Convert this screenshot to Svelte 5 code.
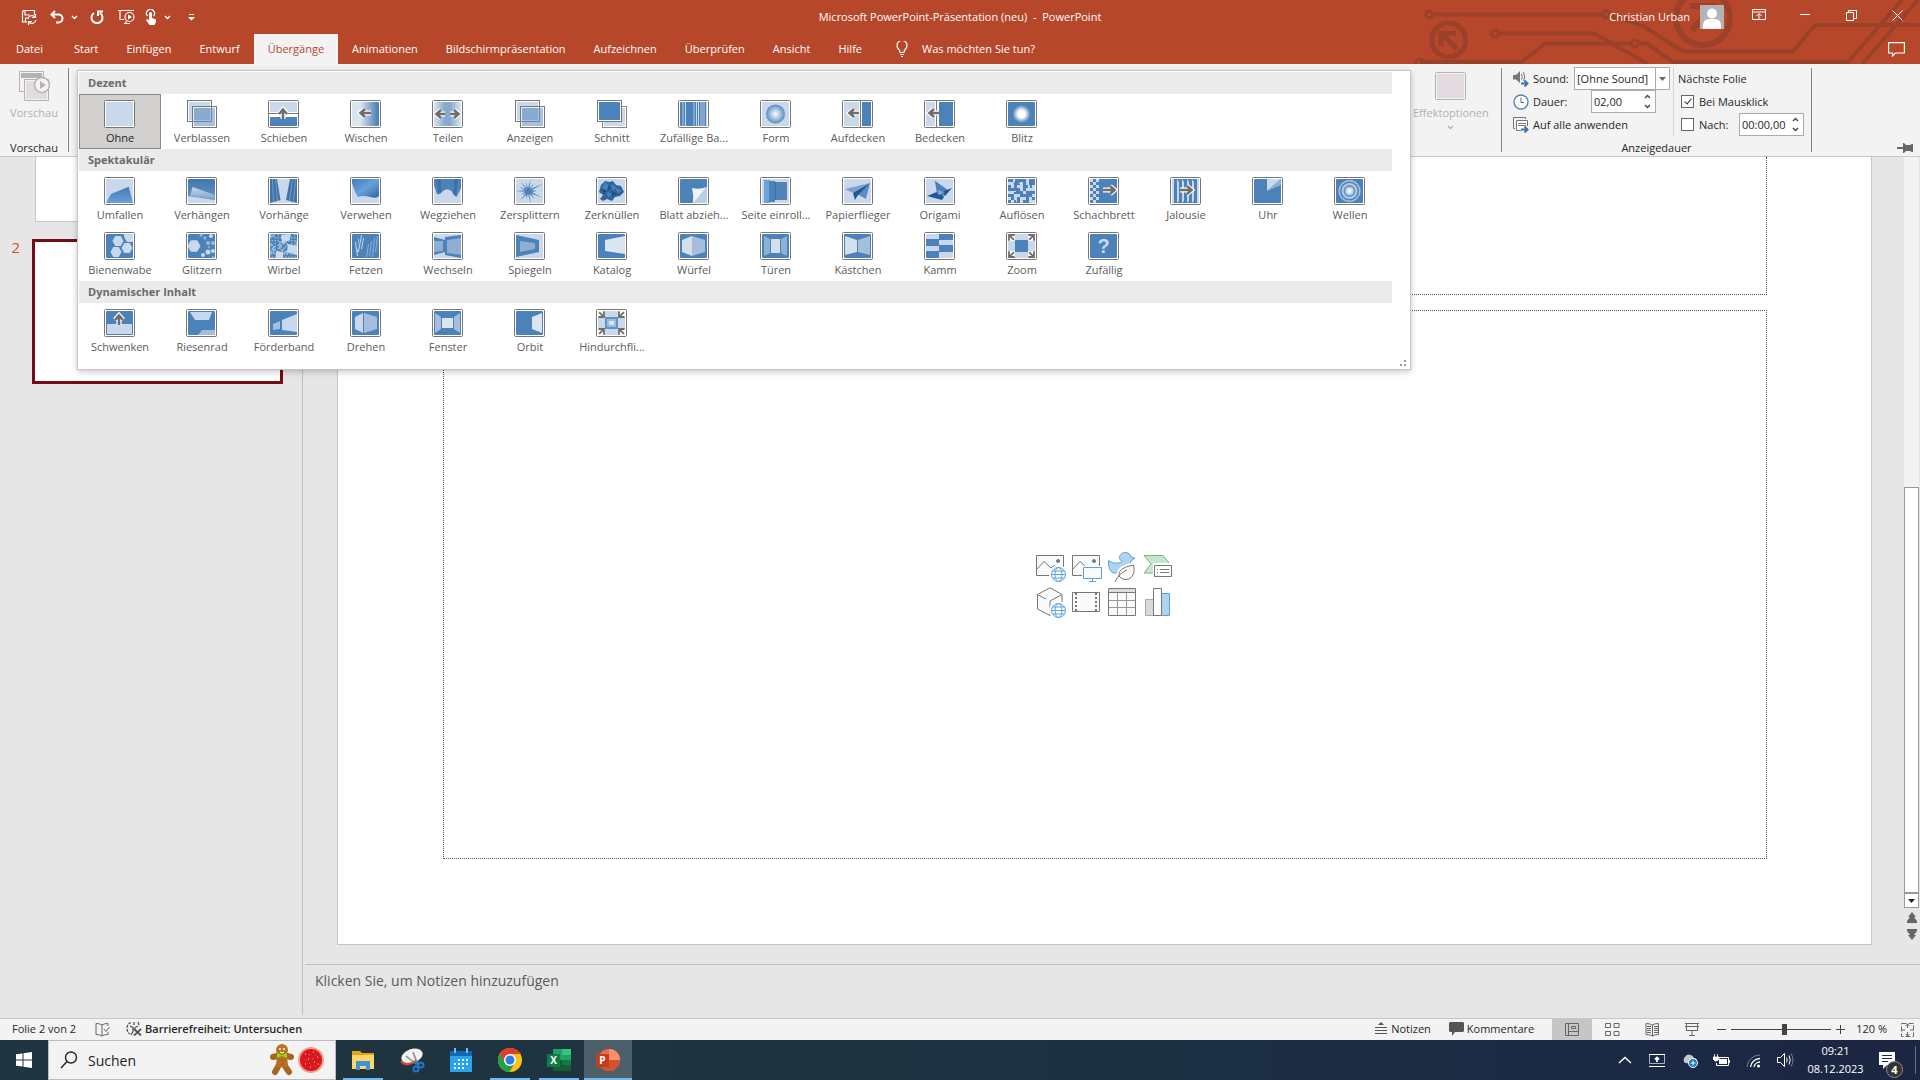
<script>
  const DARK = "#4b82b9";
  const MID = "#87aad0";
  const LIGHT = "#c9d8ea";
  const PALE = "#dbe5f0";

  const box = (x, y, w, h) => `M${x} ${y}h${w}v${h}h${-w}z`;
  const hex = (x, y, r) =>
    `M${x - r} ${y}L${x - r / 2} ${y - r * 0.9}H${x + r / 2}L${x + r} ${y}L${x + r / 2} ${y + r * 0.9}H${x - r / 2}z`;
  const disc = (x, y, r) => `M${x - r} ${y}a${r} ${r} 0 1 0 ${2 * r} 0a${r} ${r} 0 1 0 ${-2 * r} 0z`;
  const pixels = (rows, size, x0 = 2, y0 = 2) =>
    rows
      .flatMap((row, y) => [...row].map((c, x) => (c === "#" ? box(x0 + x * size, y0 + y * size, size, size) : "")))
      .join("");
  const noise = Array.from({ length: 16 }, (_, y) =>
    Array.from({ length: 18 }, (_, x) => ((x * 7 + y * 13 + x * y * 5) % 11 < 5 ? "#" : ".")).join(""),
  );
  const burst = (x, y, radii) =>
    "M" +
    radii
      .map((r, i) => {
        const a = (i / radii.length) * Math.PI * 2;
        return `${(x + Math.cos(a) * r).toFixed(1)} ${(y + Math.sin(a) * r).toFixed(1)}`;
      })
      .join("L") +
    "z";

  // shapes are [fill, path]; arrows are [tipX, tipY, angle, length], angle 0 points left
  const sections = [
    {
      title: "Dezent",
      items: [
        { label: "Ohne", bg: LIGHT },
        { label: "Verblassen", stack: [LIGHT, MID] },
        {
          label: "Schieben",
          bg: "#fff",
          shapes: [[LIGHT, box(2, 2, 27, 10)], ["#777", box(0, 13, 31, 1)], [DARK, box(2, 17, 27, 9)]],
          arrows: [[15, 8, 90, 11]],
        },
        { label: "Wischen", bg: "url(#wipe)", arrows: [[9, 13, 0, 12]] },
        { label: "Teilen", bg: "url(#split)", arrows: [[3, 14, 0, 10], [28, 14, 180, 10]] },
        { label: "Anzeigen", stack: [LIGHT, MID] },
        { label: "Schnitt", cut: true },
        {
          label: "Zufällige Ba...",
          bg: DARK,
          shapes: [
            ["#7fa6d0", box(4, 2, 2, 24) + box(15, 2, 2, 24) + box(22, 2, 5, 24)],
            [LIGHT, box(7, 2, 1, 24) + box(18, 2, 1, 24) + box(20, 2, 1, 24) + box(28, 2, 1, 24)],
          ],
        },
        { label: "Form", bg: LIGHT, shapes: [["url(#ball)", disc(15.5, 14, 9.5)]] },
        {
          label: "Aufdecken",
          bg: "#fff",
          shapes: [[LIGHT, box(2, 2, 15, 24)], ["#777", box(18, 0, 1, 28)], [DARK, box(20, 2, 9, 24)]],
          arrows: [[6, 13, 0, 11]],
        },
        {
          label: "Bedecken",
          bg: "#fff",
          shapes: [[LIGHT, box(2, 2, 9, 24)], ["#777", box(12, 0, 1, 28)], [DARK, box(15, 2, 14, 24)]],
          arrows: [[4, 13, 0, 11]],
        },
        { label: "Blitz", bg: DARK, shapes: [["url(#flash)", disc(15.5, 14, 9)]] },
      ],
    },
    {
      title: "Spektakulär",
      items: [
        { label: "Umfallen", bg: LIGHT, shapes: [["url(#fall)", "M24.700 9.700L7 17L2 26H29z"]] },
        {
          label: "Verhängen",
          bg: "url(#drape)",
          shapes: [[LIGHT, "M2 19L29 23V26H2z"], ["url(#fold)", "M6.500 10L29 18V22L4 19z"]],
        },
        {
          label: "Vorhänge",
          bg: LIGHT,
          shapes: [
            ["#3f73a9", "M2 2H9L12.500 23L2 26zM22 2H29V26L18 23z"],
            ["#6f9dcb", "M4 2H5L6 25H5zM7 2H8L10 24H9zM24 2H25L22 24H21zM27 2H28L26 25H25z"],
          ],
        },
        { label: "Verwehen", bg: LIGHT, shapes: [["url(#blow)", "M2 2H29V19Q27 22 20 20Q13 18 8 20Q5 16 2 6z"]] },
        {
          label: "Wegziehen",
          bg: LIGHT,
          shapes: [
            [DARK, "M2 2H29V11L24.500 20Q21 18 19.500 14Q14 10 10 15Q8 18 5 17Q3 12 2 8z"],
            ["#3c70a6", "M5 2H9V15L6 16zM22 2H26L24 19L22 17z"],
          ],
        },
        {
          label: "Zersplittern",
          bg: LIGHT,
          shapes: [
            [DARK, burst(14, 14, [9, 4, 15, 4, 11, 3, 13, 3, 8, 4, 12, 3, 8, 3, 13, 3, 10, 3, 12, 3, 9, 3, 13, 3, 10, 3, 17, 4])],
          ],
        },
        {
          label: "Zerknüllen",
          bg: LIGHT,
          shapes: [
            ["#2f659c", "M5 8L9 4L13 5L17 4L20 8L25 9L28 15L24 19L19 20L16 24L11 22L7 24L4 22L7 18L3 15z"],
            [DARK, "M9 5L13 9L10 13L6 11zM15 7L20 10L17 14zM20 11L26 14L21 16zM11 15L16 17L12 21z"],
            ["#1e4f86", "M6 12L11 14L8 17zM16 14L22 17L16 19zM12 8L15 12L12 13z"],
          ],
        },
        {
          label: "Blatt abzieh...",
          bg: DARK,
          shapes: [["#b9cfe6", "M29 10V26H14z"], ["#eef3f9", "M14 11Q21 13 29 10L15 26Q16 18 14 11z"]],
        },
        {
          label: "Seite einroll...",
          bg: LIGHT,
          shapes: [["#6ea2d8", box(4, 3, 6, 23)], [DARK, box(9, 4, 6, 21)], ["#3a6ea5", box(15, 5, 1, 18)], ["#5384b6", box(16, 5, 11, 18)]],
        },
        {
          label: "Papierflieger",
          bg: LIGHT,
          shapes: [["#7ba2cd", "M28 6L3 12L11 16z"], ["#5c8dc0", "M28 6L15 17L24 22z"], ["#21568e", "M28 6L11 16L13 23L16 18z"]],
        },
        {
          label: "Origami",
          bg: LIGHT,
          shapes: [["#1f5a96", "M11 4L20 11L15 14zM3 19L15 14L20 20L18 23z"], [DARK, "M11 4L13 17L21 19L24 13z"], ["#21568e", "M20 14L28 11L21 19z"], ["#8eb0d4", "M14 13L19 15L15 18z"]],
        },
        {
          label: "Auflösen",
          bg: LIGHT,
          shapes: [
            [DARK, pixels([
              "######.##",
              "..##.#.##",
              "#.#..###.",
              "####.#...",
              "..###.###",
              "##..####.",
              ".#.#..#.#",
              "#.##.##..",
            ], 3)],
            [LIGHT, box(7, 2, 2, 3) + box(13, 6, 4, 1) + box(22, 8, 2, 4) + box(10, 20, 1, 5) + box(5, 14, 5, 1)],
          ],
        },
        {
          label: "Schachbrett",
          bg: DARK,
          shapes: [[LIGHT, pixels(["#.#", ".#.", "#.#", ".#.", "#.#", ".#.", "#.#", ".#."], 3)]],
          arrows: [[28, 13, 180, 13]],
        },
        {
          label: "Jalousie",
          bg: DARK,
          shapes: [[LIGHT, "M2 2H4V26H2zM7 2L9 5V24L7 26zM12 2L14 5V24L12 26zM17 2L19 5V24L17 26zM22 2L24 5V24L22 26zM27 2H29V26H27z"]],
          arrows: [[23, 13, 180, 13]],
        },
        { label: "Uhr", bg: DARK, shapes: [[LIGHT, "M15 14V2H29z"], ["#8eb0d4", "M15 14L29 2V8z"]] },
        {
          label: "Wellen",
          bg: DARK,
          shapes: [["#a5bfdd", disc(15.5, 14, 11)], [DARK, disc(15.5, 14, 9.5)], ["#b4cae3", disc(15.5, 14, 8)], ["#6b97c6", disc(15.5, 14, 6)], ["#c9d8ea", disc(15.5, 14, 4)], ["#fff", disc(15.5, 14, 2)]],
        },
        { label: "Bienenwabe", bg: DARK, shapes: [[LIGHT, hex(14, 9, 5.5) + hex(23, 16, 5.5) + hex(12, 20, 5.5) + "M20 2H29V10H23L20 5z"]] },
        {
          label: "Glitzern",
          bg: DARK,
          shapes: [
            [LIGHT, hex(8, 14, 6.5) + disc(25, 4, 2) + disc(22, 20, 2.5) + disc(27, 19, 2) + disc(17, 23, 2)],
            ["#9bbadb", disc(19, 6, 1.5) + disc(22, 11, 2) + disc(27, 11, 2) + disc(27, 25, 1) + disc(15, 3, 1.5) + disc(23, 15, 1)],
          ],
        },
        {
          label: "Wirbel",
          bg: DARK,
          shapes: [["#9bbadb", pixels(noise, 1.5)], [LIGHT, "M13 3L22 2V8L14 11zM20 12L29 14V23L19 20zM8 19L15 20V26H8z"]],
        },
        {
          label: "Fetzen",
          bg: DARK,
          shapes: [
            [LIGHT, "M5 10L6 10L8 24H7zM8 7L9 7L7 22H8zM11 3H12L9 20H8zM13 6H14L12 17H11z"],
            ["#8fb0d5", "M18 12H19L17 25H16zM21 9H22L20 24H19zM24 6H25L23 25H22zM27 4H28L26 20H25z"],
          ],
        },
        {
          label: "Wechseln",
          bg: LIGHT,
          shapes: [[DARK, "M2 5L13 8V5L29 3V26L13 23V20L2 23z"], ["#8eaed2", "M2 9H11V19L2 20zM15 8L29 6V23L15 21z"]],
        },
        {
          label: "Spiegeln",
          bg: LIGHT,
          shapes: [[DARK, "M2 3L25 8V20L2 25z"], ["#8eaed2", "M6 9L21 11V17L6 20z"]],
        },
        { label: "Katalog", bg: DARK, shapes: [[PALE, "M9 8L29 4V22L9 19z"]] },
        { label: "Würfel", bg: DARK, shapes: [["#d3e0ea", "M4 8L14 4V24L4 20z"], ["#a5bedb", "M14 4L27 8V20L14 24z"]] },
        {
          label: "Türen",
          bg: DARK,
          shapes: [["#8eb0d4", "M4 4L10 7V21L4 24zM27 4L21 7V21L27 24z"], ["#d3e0ea", box(11, 7, 9, 14)]],
        },
        { label: "Kästchen", bg: DARK, shapes: [["#d3e0ea", "M3 4L15 8V20L3 23z"], ["#a5bedb", "M16 8L28 4V23L16 20z"]] },
        { label: "Kamm", bg: DARK, shapes: [[LIGHT, box(2, 2, 13, 5) + box(2, 14, 13, 5) + box(15, 8, 14, 5) + box(15, 20, 14, 6)]] },
        {
          label: "Zoom",
          bg: LIGHT,
          shapes: [["#fff", box(2, 2, 7, 7) + box(22, 2, 7, 7) + box(2, 19, 7, 7) + box(22, 19, 7, 7)], [DARK, box(9, 8, 13, 12)]],
          small: [[3, 3, 45], [28, 3, 135], [28, 25, 225], [3, 25, 315]],
        },
        { label: "Zufällig", bg: DARK, mark: "?" },
      ],
    },
    {
      title: "Dynamischer Inhalt",
      items: [
        { label: "Schwenken", bg: DARK, shapes: [[LIGHT, box(3, 15, 25, 10)]], arrows: [[15, 5, 90, 11]] },
        { label: "Riesenrad", bg: DARK, shapes: [[LIGHT, "M4 3H26L23 11H9z"], ["#a5bedb", "M16 21H29V26H12z"]] },
        { label: "Förderband", bg: DARK, shapes: [["#a5bedb", "M5 15L12 12V20L5 21z"], [LIGHT, "M14 11L29 5V23L14 21z"]] },
        { label: "Drehen", bg: DARK, shapes: [[LIGHT, "M5 8L13 4V24L5 20z"], ["#a5bedb", "M14 4L27 8V20L14 24z"]] },
        {
          label: "Fenster",
          bg: DARK,
          shapes: [["#a5bedb", "M3 4L9 8V20L3 24zM28 4L22 8V20L28 24z"], [PALE, box(10, 9, 11, 10)]],
        },
        { label: "Orbit", bg: DARK, shapes: [[PALE, "M18 8L28 4V24L18 20z"]] },
        {
          label: "Hindurchfli...",
          bg: LIGHT,
          shapes: [["#fff", box(2, 2, 7, 7) + box(22, 2, 7, 7) + box(2, 19, 7, 7) + box(22, 19, 7, 7)], ["#5f92c6", box(9, 8, 13, 12)], ["#9dbbdc", box(11, 10, 9, 8)], [PALE, box(13, 12, 5, 4)]],
          small: [[8, 8, 225], [23, 8, 315], [23, 20, 45], [8, 20, 135]],
        },
      ],
    },
  ];

  const tabs = [
    "Datei", "Start", "Einfügen", "Entwurf", "Übergänge", "Animationen",
    "Bildschirmpräsentation", "Aufzeichnen", "Überprüfen", "Ansicht", "Hilfe",
  ];

  let activeTab = $state("Übergänge");
  let selected = $state("Ohne");
  let onClick = $state(true);
  let afterTime = $state(false);
  let zoom = $state(54);
</script>

{#snippet thumb(item)}
  <svg width="32" height="28" viewBox="0 0 32 28" aria-hidden="true">
    {#if item.stack}
      <rect x="1.500" y="0.500" width="24" height="21" fill="#fff" stroke="#777" />
      <rect x="3" y="2" width="21" height="18" fill={item.stack[0]} />
      <rect x="6.500" y="6.500" width="24" height="21" fill="#fff" fill-opacity="0.6" stroke="#777" />
      <rect x="8" y="8" width="21" height="18" fill="#a9c1de" />
      <rect x="8" y="8" width="16" height="12" fill={item.stack[1]} />
      <path d="M25.500 6V21.500H6" fill="none" stroke="#6886a8" />
    {:else if item.cut}
      <rect x="6.500" y="6.500" width="24" height="21" fill="#fff" stroke="#888" />
      <rect x="8" y="8" width="21" height="18" fill={LIGHT} />
      <rect x="1.500" y="0.500" width="24" height="21" fill="#fff" stroke="#777" />
      <rect x="3" y="2" width="21" height="18" fill={DARK} />
    {:else}
      <rect x="0.500" y="0.500" width="30" height="27" rx="1" fill="#fff" stroke="#777" />
      <rect x="2" y="2" width="27" height="24" rx="1" fill={item.bg} />
      {#each item.shapes ?? [] as [fill, d]}
        <path {d} {fill} />
      {/each}
      {#each item.arrows ?? [] as [x, y, angle, len]}
        <g transform="translate({x} {y}) rotate({angle})" fill="none">
          <path d="M1 0H{len}M6 -4L1.500 0L6 4" stroke="#fff" stroke-width="5" />
          <path d="M1.500 0H{len}M6 -4L1.500 0L6 4" stroke="#6f6e6c" stroke-width="2.600" />
        </g>
      {/each}
      {#each item.small ?? [] as [x, y, angle]}
        <g transform="translate({x} {y}) rotate({angle})" fill="none" stroke="#6f6e6c" stroke-width="1.800">
          <path d="M0 0H7M4 -4L0 0L4 4" />
        </g>
      {/each}
      {#if item.mark}
        <text x="15.500" y="21" text-anchor="middle" class="mark">{item.mark}</text>
      {/if}
    {/if}
  </svg>
{/snippet}

{#snippet chevron(color)}
  <svg width="7" height="5" viewBox="0 0 7 5" aria-hidden="true">
    <path d="M1 1l2.500 2.500L6 1" fill="none" stroke={color} stroke-width="1.400" />
  </svg>
{/snippet}

{#snippet spinner()}
  <span class="steps">
    <button aria-label="Erhöhen">
      <svg width="7" height="5" viewBox="0 0 7 5"><path d="M1 4l2.500-2.500L6 4" fill="none" stroke="#444" stroke-width="1.400" /></svg>
    </button>
    <button aria-label="Verringern">{@render chevron("#444")}</button>
  </span>
{/snippet}

{#snippet globe(x, y)}
  <g fill="none" stroke="#5aa2d8">
    <circle cx={x} cy={y} r="9" fill="#fff" stroke="#fff" />
    <circle cx={x} cy={y} r="7" fill="#fff" />
    <ellipse cx={x} cy={y} rx="3.500" ry="7" />
    <path d="M{x - 7} {y}h14M{x - 6} {y - 3.5}h12M{x - 6} {y + 3.5}h12" />
  </g>
{/snippet}

<svg class="defs" width="0" height="0" aria-hidden="true">
  <defs>
    <linearGradient id="wipe"><stop offset="0.300" stop-color="#dbe5f0" /><stop offset="1" stop-color="#427ab4" /></linearGradient>
    <linearGradient id="split"><stop offset="0" stop-color="#dbe5f0" /><stop offset="0.400" stop-color="#87aad0" /><stop offset="0.600" stop-color="#87aad0" /><stop offset="1" stop-color="#dbe5f0" /></linearGradient>
    <radialGradient id="ball"><stop offset="0" stop-color="#fff" /><stop offset="0.800" stop-color="#7aa2cf" /><stop offset="1" stop-color="#5b8cc0" /></radialGradient>
    <radialGradient id="flash"><stop offset="0.400" stop-color="#fff" /><stop offset="1" stop-color="#4b82b9" /></radialGradient>
    <linearGradient id="fall" x2="0" y2="1"><stop offset="0" stop-color="#437bb6" /><stop offset="1" stop-color="#69a0da" /></linearGradient>
    <linearGradient id="drape" x2="0" y2="1"><stop offset="0" stop-color="#3f76ae" /><stop offset="1" stop-color="#6c9acb" /></linearGradient>
    <linearGradient id="fold" x2="0" y2="1"><stop offset="0" stop-color="#c9d8ea" /><stop offset="1" stop-color="#7fa6d0" /></linearGradient>
    <linearGradient id="blow" x2="1" y2="1"><stop offset="0" stop-color="#437bb6" /><stop offset="0.500" stop-color="#68a0da" /><stop offset="1" stop-color="#2f659c" /></linearGradient>
  </defs>
</svg>

<div class="app">
  <header class="top">
    <svg class="circuit" width="510" height="64" viewBox="1410 0 510 64" fill="none" stroke="#9b4129" stroke-width="4" aria-hidden="true">
      <circle cx="1429" cy="14.500" r="3.500" stroke-width="3" /><path d="M1433 14.500H1602" />
      <circle cx="1606" cy="14.500" r="3.500" stroke-width="3" />
      <path d="M1610 15L1643 26L1683 51.500H1793L1815 25H1920" />
      <circle cx="1495" cy="33.500" r="3.500" stroke-width="3" /><path d="M1499 33.500H1594L1648 64" />
      <path d="M1420 62H1522L1545 43.500H1631" /><circle cx="1420" cy="63" r="4" stroke-width="3" />
      <circle cx="1635" cy="43.500" r="3.500" stroke-width="3" />
      <path d="M1639 43.500H1647L1673 62H1848L1902 0M1862 64L1918 0" />
      <circle cx="1448.500" cy="40" r="17" stroke-width="5" /><path d="M1457 49L1443 35M1441 46V33.500H1456" stroke-width="5" />
      <circle cx="1703" cy="18" r="27" stroke-width="6" /><path d="M1692 30L1712 8M1690 6H1714V26" stroke-width="6" />
    </svg>

    <div class="title-bar">
      <div class="quick">
        <button aria-label="Speichern" class="save">
          <svg width="16" height="16" viewBox="0 0 16 16" fill="none" stroke="#fff" stroke-width="1.200">
            <path d="M6 13H1.500V2.500L2.500 1.500H13.500V6M4 1.500V6H9" /><path d="M4.500 13V9H7" />
            <path d="M7 10a4 4 0 0 1 7-2M14.500 5V8.500H11M15 11a4 4 0 0 1-7 2M7.500 16V12.500H11" />
          </svg>
        </button>
        <button aria-label="Rückgängig" class="undo">
          <svg width="14" height="14" viewBox="0 0 14 14" fill="none" stroke="#fff" stroke-width="2"><path d="M5 1L1.500 4.500L5 8M2 4.500H8.500a4 4 0 0 1 0 8H6" /></svg>
          {@render chevron("#fff")}
        </button>
        <button aria-label="Wiederholen" class="redo">
          <svg width="14" height="15" viewBox="0 0 14 15" fill="none" stroke="#fff" stroke-width="2"><path d="M4 3a5.500 5.500 0 1 0 6 0M8 6V1.500H13" /></svg>
        </button>
        <button aria-label="Bildschirmpräsentation starten" class="present">
          <svg width="17" height="16" viewBox="0 0 17 16" fill="none" stroke="#fff" stroke-width="1.200">
            <path d="M0 1.500H16M2 1.500V10.500H6M6 14.500H12M8 12V14" /><circle cx="11.500" cy="8" r="4.500" /><path d="M10 5.500L14 8L10 10.500z" fill="#fff" stroke="none" />
          </svg>
        </button>
        <button aria-label="Touch-/Mausmodus" class="touch">
          <svg width="12" height="16" viewBox="0 0 12 16"><path d="M4 4.500a1.500 1.500 0 0 1 3 0V9l4 1.500V13L9.500 16H4.500L1 11l1-1 2 1.500z" fill="#fff" /><path d="M2.500 7a4 4 0 1 1 6 0" fill="none" stroke="#fff" stroke-width="1.300" /></svg>
          {@render chevron("#fff")}
        </button>
        <button aria-label="Symbolleiste anpassen">
          <svg width="7" height="7" viewBox="0 0 7 7" fill="#fff"><path d="M1 0H6V1H1zM0 3H7L3.500 6.500z" /></svg>
        </button>
      </div>
      <div class="doc-title">Microsoft PowerPoint-Präsentation (neu)&nbsp; -&nbsp; PowerPoint</div>
      <div class="title-end">
        <div class="account">
          <span>Christian Urban</span>
          <svg width="24" height="24" viewBox="0 0 24 24" aria-hidden="true"><path d="M0 0h24v24H0z" fill="#b3b3b3" /><circle cx="12" cy="8.500" r="5" fill="#fff" /><path d="M3 24V21Q3 14 9 14H15Q21 14 21 21V24z" fill="#fff" /></svg>
        </div>
        <div class="window-buttons">
          <button aria-label="Menüband-Anzeigeoptionen"><svg width="14" height="12" viewBox="0 0 14 12" fill="none" stroke="#fff"><path d="M.5.5h13v10H.5zM.5 3h13M7 10V5M4.500 7L7 4.500L9.500 7" /></svg></button>
          <button aria-label="Minimieren"><svg width="10" height="12" viewBox="0 0 10 12" stroke="#fff"><path d="M0 5.500h10" /></svg></button>
          <button aria-label="Verkleinern"><svg width="11" height="11" viewBox="0 0 11 11" fill="none" stroke="#fff"><path d="M.5 2.500h7v8h-7zM2.500 2V.5H10.500V8.500H8" /></svg></button>
          <button aria-label="Schließen"><svg width="11" height="11" viewBox="0 0 11 11" stroke="#fff"><path d="M.5.5l10 10M10.500.5l-10 10" /></svg></button>
        </div>
      </div>
    </div>

    <div class="tab-bar">
      <div class="tabs" role="tablist">
        {#each tabs as tab}
          <button role="tab" class:active={tab === activeTab} aria-selected={tab === activeTab} onclick={() => (activeTab = tab)}>{tab}</button>
        {/each}
      </div>
      <label class="tell-me">
        <svg width="12" height="16" viewBox="0 0 12 16" fill="none" stroke="#fff" stroke-width="1.200" aria-hidden="true"><path d="M4 11.500Q4 9.500 2.500 8a5 5 0 1 1 7 0Q8 9.500 8 11.500zM4 13.500h4M5 15.500h2" /></svg>
        <input aria-label="Was möchten Sie tun?" placeholder="Was möchten Sie tun?" />
      </label>
      <button class="comment" aria-label="Kommentare"><svg width="17" height="15" viewBox="0 0 17 15" fill="none" stroke="#fff" stroke-width="1.200"><path d="M.6.6h15.800v10.400H7.500L4.500 14V11H.6z" /></svg></button>
    </div>
  </header>

  <section class="ribbon" aria-label="Übergänge">
    <div class="group preview">
      <button class="big" disabled>
        <svg width="31" height="30" viewBox="0 0 31 30" aria-hidden="true">
          <path d="M.5.5h24v20H.5z" fill="#f5f2f4" stroke="#b4b2b3" /><path d="M2 2h21v5H2z" fill="#b4b2b3" />
          <path d="M5.500 8.500h24v21h-24z" fill="#f5f2f4" stroke="#b4b2b3" /><path d="M7 10h21v18H7z" fill="#e2dce0" />
          <circle cx="23" cy="14" r="7.500" fill="#f5f2f4" stroke="#b4b2b3" stroke-width="1.500" /><path d="M21 10l6 4-6 4z" fill="#b4b2b3" />
        </svg>
        Vorschau
      </button>
      <div class="group-name">Vorschau</div>
    </div>

    <div class="gallery-slot">
      <div class="gallery" role="listbox" aria-label="Übergang zu dieser Folie">
        {#each sections as section}
          <h2>{section.title}</h2>
          <div class="grid">
            {#each section.items as item}
              <button
                class="item"
                class:selected={item.label === selected}
                role="option"
                aria-selected={item.label === selected}
                onclick={() => (selected = item.label)}
              >
                {@render thumb(item)}
                {item.label}
              </button>
            {/each}
          </div>
        {/each}
        <svg class="grip" width="6" height="6" viewBox="0 0 6 6" fill="#999" aria-hidden="true"><path d="M4 0h2v2H4zM0 4h2v2H0zM4 4h2v2H4z" /></svg>
      </div>
    </div>

    <div class="group effect">
      <button class="big" disabled>
        <svg width="31" height="30" viewBox="0 0 31 30" aria-hidden="true"><rect x=".5" y="1.500" width="30" height="27" rx="1" fill="#f5f2f4" stroke="#b4b2b3" /><path d="M2 3h27v24H2z" fill="#e2dce0" /></svg>
        Effektoptionen
        {@render chevron("#b4b2b3")}
      </button>
    </div>

    <div class="group timing">
      <div class="columns">
        <div class="column">
          <div class="row">
            <svg width="16" height="16" viewBox="0 0 16 16" aria-hidden="true"><path d="M0 4h3l4-4v12L3 8.500H0z" fill="#777" /><path d="M8.500 3Q10 6 8.500 8.500M10.500 1Q13 6 10.500 10" fill="none" stroke="#777" /><path d="M8 12.500h6M11.500 9.500l3 3-3 3" fill="none" stroke="#3f77b5" stroke-width="2" /></svg>
            <label for="sound">Sound:</label>
            <span class="combo">
              <select id="sound"><option>[Ohne Sound]</option></select>
              <svg width="7" height="4" viewBox="0 0 7 4" aria-hidden="true"><path d="M0 0h7L3.500 4z" fill="#666" /></svg>
            </span>
          </div>
          <div class="row">
            <svg width="16" height="16" viewBox="0 0 16 16" fill="none" aria-hidden="true"><circle cx="8" cy="8" r="7" fill="#fff" stroke="#4b82b9" stroke-width="1.300" /><path d="M8 3.500V8.500H11" stroke="#666" /></svg>
            <label for="duration">Dauer:</label>
            <span class="spin"><input id="duration" value="02,00" />{@render spinner()}</span>
          </div>
          <button class="row apply">
            <svg width="16" height="16" viewBox="0 0 16 16" fill="none" stroke="#777" aria-hidden="true"><path d="M2 11.500H.5V.5H12.500V2" /><path d="M8 13.500H3.500V3.500H14.500V9M5 6.500h8M5 8.500h8" fill="#fff" /><path d="M8 12.500h6M11.500 9.500l3 3-3 3" stroke="#3f77b5" stroke-width="2" /></svg>
            Auf alle anwenden
          </button>
        </div>
        <div class="column advance">
          <div class="row">Nächste Folie</div>
          <label class="row"><input type="checkbox" bind:checked={onClick} />Bei Mausklick</label>
          <div class="row">
            <label class="check"><input type="checkbox" bind:checked={afterTime} />Nach:</label>
            <span class="spin"><input aria-label="Nach Zeit" value="00:00,00" />{@render spinner()}</span>
          </div>
        </div>
      </div>
      <div class="group-name">Anzeigedauer</div>
    </div>

    <button class="pin" aria-label="Menüband anheften"><svg width="16" height="10" viewBox="0 0 16 10" fill="#666"><path d="M0 4h6v2H0zM6 0h1l2 2h4l2-1h1v8h-1l-2-1H9l-2 2H6z" /></svg></button>
  </section>

  <main>
    <aside class="slides">
      <div class="slide-row"><span></span><div class="preview-slide"></div></div>
      <div class="slide-row"><span>2</span><div class="preview-slide current"></div></div>
    </aside>

    <div class="editor">
      <div class="stage">
        <div class="slide">
          <div class="placeholder heading"></div>
          <div class="placeholder content">
            <div class="inserts">
              <button aria-label="Archivbilder">
                <svg width="36" height="36" viewBox="0 0 36 36" fill="#fafafa" stroke="#777"><path d="M1.500 4.500h27v20h-27z" /><path d="M2 18L9 10.500L16 17L19 14.500L24 19" fill="none" /><circle cx="23" cy="10" r="1.500" fill="#777" />{@render globe(23.500, 23.500)}</svg>
              </button>
              <button aria-label="Bilder">
                <svg width="36" height="36" viewBox="0 0 36 36" fill="#fafafa" stroke="#777"><path d="M1.500 4.500h27v20h-27z" /><path d="M2 18L9 10.500L15 16" fill="none" /><circle cx="23" cy="10" r="1.500" fill="#777" /><path d="M11 15h21v15H11z" fill="#fff" stroke="none" /><path d="M12.500 16.500h18v11h-18zM21.500 28v2M18 30.500h7" stroke="#5aa2d8" /></svg>
              </button>
              <button aria-label="Piktogramme">
                <svg width="36" height="36" viewBox="0 0 36 36" fill="none"><path d="M1.500 9.500Q6 13.500 12 12Q14 12 15 10.500Q11 8 13 4.500Q16 0 21 2Q24 3.500 24.500 6.500L28 7L24 10Q23 14 20 16L14 22H6Q1 19 1.500 9.500z" fill="#afd3f2" stroke="#5aa2d8" /><path d="M26.500 13Q31 24 22 29Q17 30 12 27Q8 16 26.500 13z" fill="#fff" stroke="#fff" stroke-width="3" /><path d="M26.500 14Q29 24 22 28Q16 30 12 25Q10 17 26.500 14zM8 31Q12 22 20 19" fill="#fafafa" stroke="#777" /></svg>
              </button>
              <button aria-label="SmartArt">
                <svg width="36" height="36" viewBox="0 0 36 36"><path d="M1 4.500H20L27 13V22H1L8 13z" fill="#c3e8cb" stroke="#76b586" /><path d="M10 12h20v14H10z" fill="#fff" /><path d="M11.500 14.500h17v11h-17zM17 18.500h9M17 21.500h9M14 18.500h1M14 21.500h1" fill="#fff" stroke="#777" /></svg>
              </button>
              <button aria-label="3D-Modelle">
                <svg width="36" height="36" viewBox="0 0 36 36" fill="#fafafa" stroke="#777"><path d="M2.500 7.500L15 .8L27 7.500V21L15 28.500L2.500 22z" /><path d="M2.500 7.500L11 12M15 28V14L27 7.500" fill="none" />{@render globe(23.500, 23.500)}</svg>
              </button>
              <button aria-label="Video">
                <svg width="36" height="36" viewBox="0 0 36 36"><path d="M1.500 5.500h27v19h-27z" fill="#fafafa" stroke="#777" /><path d="M5 6v19M25 6v19" stroke="#777" stroke-width="2" stroke-dasharray="2 2" /></svg>
              </button>
              <button aria-label="Tabelle">
                <svg width="36" height="36" viewBox="0 0 36 36" fill="none"><path d="M1.500 1.500h27v27h-27z" fill="#fafafa" /><path d="M2 2h26v3H2z" fill="#ddd" /><path d="M10.500 6v22M19.500 6v22M2 13.500h26M2 20.500h26" stroke="#999" /><path d="M1.500 1.500h27v27h-27zM2 5.500h26" stroke="#777" /></svg>
              </button>
              <button aria-label="Diagramm">
                <svg width="36" height="36" viewBox="0 0 36 36"><path d="M2.500 12.500h8v16h-8z" fill="#d9d9d9" stroke="#aaa" /><path d="M18.500 6.500h8v22h-8z" fill="#afd3f2" stroke="#5aa2d8" /><path d="M10.500 1.500h8v27h-8z" fill="#fff" stroke="#777" /></svg>
              </button>
            </div>
          </div>
        </div>
        <div class="scroll">
          <div class="track"></div>
          <div class="handle"></div>
          <button class="down" aria-label="Nach unten"><svg width="7" height="4" viewBox="0 0 7 4"><path d="M0 0h7L3.500 4z" fill="#222" /></svg></button>
          <button aria-label="Vorherige Folie"><svg width="10" height="11" viewBox="0 0 10 11" fill="#666"><path d="M5 0L9 5H7L10 9V11H0V9L3 5H1z" /></svg></button>
          <button aria-label="Nächste Folie"><svg width="10" height="11" viewBox="0 0 10 11" fill="#666"><path d="M5 11L9 6H7L10 2V0H0V2L3 6H1z" /></svg></button>
        </div>
      </div>
      <textarea class="notes" aria-label="Notizen" placeholder="Klicken Sie, um Notizen hinzuzufügen"></textarea>
    </div>
  </main>

  <footer class="status">
    <span class="count">Folie 2 von 2</span>
    <button class="spell" aria-label="Rechtschreibung"><svg width="15" height="14" viewBox="0 0 15 14" fill="none" stroke="#666"><path d="M7 12.500V2Q5 .5 1 .5V11.500Q5 11.500 7 13Q9 11.500 13 11.500V9M7 2Q9 .5 13 .5V3M9 6l2 2.500L14.500 4" /></svg></button>
    <button class="access"><svg width="16" height="15" viewBox="0 0 16 15" fill="none" stroke="#555" stroke-width="1.300"><path d="M5 1.500Q1 3 1 7.500Q1 11 4 13" stroke-dasharray="3 1" /><path d="M8 1v3M4 5l3 1.500v4L5 14M12 5l-3 1.500M8 7l2 2M12 1l1 3" /><path d="M8 8l7 6.500M15 8l-7 6.500" stroke-width="1.800" /></svg>Barrierefreiheit: Untersuchen</button>
    <span class="fill"></span>
    <button class="notes-btn"><svg width="12" height="13" viewBox="0 0 12 13" fill="none" stroke="#555"><path d="M0 5.500h12M0 8.500h12M0 11.500h12" /><path d="M3 3L6 0L9 3z" fill="#555" stroke="none" /></svg>Notizen</button>
    <button class="comments-btn"><svg width="15" height="14" viewBox="0 0 15 14" fill="#555"><path d="M1 0h13l1 1v8l-1 1H6L3 14V10H1L0 9V1z" /></svg>Kommentare</button>
    <div class="views">
      <button class="on" aria-label="Normal"><svg width="15" height="14" viewBox="0 0 15 14" fill="none" stroke="#666"><path d="M.5.5h13v12H.5zM3.500.5v12M3.500 8.500h10M6.500 3.500h4v2h-4z" /></svg></button>
      <button aria-label="Foliensortierung"><svg width="15" height="14" viewBox="0 0 15 14" fill="none" stroke="#666"><path d="M.5.5h5v4h-5zM9 .5h5v4H9zM.5 8.500h5v4h-5zM9 8.500h5v4H9z" /></svg></button>
      <button aria-label="Leseansicht"><svg width="15" height="14" viewBox="0 0 15 14" fill="none" stroke="#666"><path d="M7.500 13V2Q5 .5 1 .5V11.500Q5 11.500 7.500 13Q9 11.500 13.500 11.500V.5Q9 .5 7.500 2M2 3.500h4M2 5.500h4M2 7.500h4M2 9.500h4M9 3.500h4M9 5.500h4M9 7.500h4M9 9.500h4" /></svg></button>
      <button aria-label="Bildschirmpräsentation"><svg width="15" height="14" viewBox="0 0 15 14" fill="none" stroke="#666"><path d="M0 .5h14M1.500 1v6.500h11V1M0 3.500h14M7 8v4M4 12.500h6" /></svg></button>
    </div>
    <button class="step" aria-label="Verkleinern"><svg width="9" height="9" viewBox="0 0 9 9" stroke="#444"><path d="M0 4.500h9" /></svg></button>
    <input class="zoom" type="range" min="0" max="100" aria-label="Zoom" bind:value={zoom} />
    <button class="step" aria-label="Vergrößern"><svg width="9" height="9" viewBox="0 0 9 9" stroke="#444"><path d="M0 4.500h9M4.500 0v9" /></svg></button>
    <button class="percent">120 %</button>
    <button class="fit" aria-label="An Fenster anpassen"><svg width="13" height="14" viewBox="0 0 13 14" fill="none" stroke="#666"><path d="M.5.5h12v13H.5z" stroke-dasharray="5 2" /><path d="M6.500 1v4M4.500 3L6.500 1L8.500 3M6.500 13V9M4.500 11l2 2 2-2M1 7h3M12 7H9" /></svg></button>
  </footer>

  <footer class="taskbar">
    <button class="start" aria-label="Start"><svg width="16" height="16" viewBox="0 0 16 16" fill="#fff"><path d="M0 2.300L6.500 1.400V7.500H0zM7.500 1.200L16 0V7.500H7.500zM0 8.500H6.500V14.600L0 13.700zM7.500 8.500H16V16L7.500 14.800z" /></svg></button>
    <label class="search">
      <svg width="18" height="18" viewBox="0 0 18 18" fill="none" stroke="#222" stroke-width="1.400" aria-hidden="true"><circle cx="11" cy="6.500" r="5.500" /><path d="M7 10.500L1 17" /></svg>
      <input placeholder="Suchen" aria-label="Suchen" />
      <svg width="56" height="34" viewBox="0 0 56 34" aria-hidden="true">
        <path d="M12 12L4 14M14 12L22 14M11 20L6 29M14 20L20 29" stroke="#a9651d" stroke-width="6" stroke-linecap="round" />
        <circle cx="13" cy="7" r="6" fill="#b87325" /><path d="M8 11h10l1 13H7z" fill="#b4701f" />
        <circle cx="11" cy="6" r="1" fill="#fff" /><circle cx="15" cy="6" r="1" fill="#fff" /><path d="M11 9q2 2 4 0" stroke="#fff" fill="none" />
        <path d="M8 10l5 2 5-2v5l-5-2-5 2z" fill="#8cdc1c" /><circle cx="13" cy="17" r="1" fill="#d33" /><circle cx="13" cy="21" r="1" fill="#d33" />
        <circle cx="42" cy="17" r="13" fill="#e5a58c" /><circle cx="42" cy="17" r="11" fill="#e3131b" />
        <path d="M36 11h1M44 9h1M48 14h1M39 16h1M45 19h1M36 21h1M41 24h1M49 21h1" stroke="#ffd7d7" /><path d="M40 12h1M46 12h1M36 17h1M43 16h1M40 20h1M46 23h1" stroke="#2f9b3a" stroke-width="2" />
      </svg>
    </label>
    <div class="apps">
      <button class="running" aria-label="Explorer"><svg width="24" height="24" viewBox="0 0 24 24"><path d="M1 3h8l2 2h12v16H1z" fill="#e8a317" /><path d="M1 7h22v14H1z" fill="#ffd766" /><path d="M5 13h14v9h-4v-4H9v4H5z" fill="#3f92dc" /></svg></button>
      <button aria-label="Snipping Tool"><svg width="26" height="26" viewBox="0 0 26 26"><ellipse cx="13" cy="9" rx="11" ry="7" transform="rotate(-20 13 9)" fill="#f2f2f2" /><path d="M2 14q3 5 11 2l5-3" fill="none" stroke="#d9453d" stroke-width="2" /><path d="M7 9L17 17M14 5L19 18" stroke="#888" stroke-width="1.500" /><path d="M15 16l5-1M17 15v6" stroke="#1d76c9" /><g fill="none" stroke="#1d76c9" stroke-width="2"><circle cx="22" cy="18" r="2.500" /><circle cx="17" cy="22" r="2.500" /></g></svg></button>
      <button aria-label="Kalender"><svg width="24" height="24" viewBox="0 0 24 24"><path d="M1 3h22v21H1z" fill="#29a3ec" /><path d="M1 3h22v5H1z" fill="#1666b4" /><path d="M6 0v5M18 0v5" stroke="#5fc3ff" stroke-width="2" /><path d="M9 12h11M5 16h15M5 20h11" stroke="#fff" stroke-width="2" stroke-dasharray="2 2" /></svg></button>
      <button class="running" aria-label="Chrome"><svg width="24" height="24" viewBox="0 0 24 24"><circle cx="12" cy="12" r="12" fill="#fbc116" /><path d="M1.600 6A12 12 0 0 1 22.400 6H12L7 15z" fill="#e33b2e" /><path d="M1.600 6A12 12 0 0 0 11.500 24L17 15H7z" fill="#23a047" /><circle cx="12" cy="12" r="6" fill="#fff" /><circle cx="12" cy="12" r="4.500" fill="#2b7de9" /></svg></button>
      <button class="running" aria-label="Excel"><svg width="24" height="24" viewBox="0 0 24 24"><path d="M6 1h18v22H6z" fill="#21a366" /><path d="M15 1h9v6h-9z" fill="#33c481" /><path d="M6 12h9v5H6zM6 17h18v6H6z" fill="#185c37" /><path d="M15 12h9v5h-9z" fill="#107c41" /><path d="M0 6h13v13H0z" fill="#107c41" /><text x="6.500" y="16" text-anchor="middle" class="app-letter">X</text></svg></button>
      <button class="running current" aria-label="PowerPoint"><svg width="24" height="24" viewBox="0 0 24 24"><circle cx="13" cy="12" r="11" fill="#ed6c47" /><path d="M13 1a11 11 0 0 1 11 11H13z" fill="#ff8f6b" /><path d="M2 12h22a11 11 0 0 1-22 0z" fill="#d35230" /><path d="M0 6h13v13H0z" fill="#c43e1c" /><text x="6.500" y="16" text-anchor="middle" class="app-letter">P</text></svg></button>
    </div>
    <span class="fill"></span>
    <div class="tray">
      <button aria-label="Ausgeblendete Symbole"><svg width="14" height="8" viewBox="0 0 14 8" fill="none" stroke="#fff" stroke-width="1.400"><path d="M1 7l6-5.500L13 7" /></svg></button>
      <button aria-label="Bildschirm"><svg width="16" height="13" viewBox="0 0 16 13" fill="none" stroke="#fff"><path d="M.5.5h15v9H.5z" stroke="#a9b1ba" /><path d="M0 .5h16M0 12.500h16" /><path d="M8 8V4M6 5.500L8 3.500L10 5.500" stroke-width="1.800" /></svg></button>
      <button aria-label="OneDrive"><svg width="17" height="15" viewBox="0 0 17 15"><path d="M4 10a4 4 0 0 1 0-6a5 5 0 0 1 9 1a3 3 0 0 1 0 6z" fill="#c5c9cd" /><circle cx="12" cy="10" r="4.500" fill="#1673c5" stroke="#fff" /><path d="M9.500 10h5M12 7.500v5" stroke="#fff" /></svg></button>
      <button aria-label="Akku"><svg width="17" height="13" viewBox="0 0 17 13" fill="none" stroke="#fff"><path d="M6 3.500h9.500v8H3.500V9" /><path d="M6 5h8v5H6zM16 6h1v3h-1z" fill="#fff" stroke="none" /><path d="M1.500 0v3M4.500 0v3M0 3h6v2L4 7H2L0 5z" fill="#fff" stroke-width=".8" /></svg></button>
      <button aria-label="WLAN"><svg width="15" height="15" viewBox="0 0 15 15" fill="none" stroke="#fff"><path d="M1 14A13 13 0 0 1 14 2" stroke="#77828f" /><path d="M4.500 14A9.500 9.500 0 0 1 14 5.500M8 14A6 6 0 0 1 14 9" stroke-width="1.300" /><circle cx="12.500" cy="13" r="1.500" fill="#fff" stroke="none" /></svg></button>
      <button aria-label="Lautstärke"><svg width="17" height="14" viewBox="0 0 17 14" fill="none" stroke="#fff"><path d="M.5 4.500h3l4-4v13l-4-4h-3zM9.500 4.500Q11 7 9.500 9.500M12 2.500Q14.500 7 12 11.500" /><path d="M14 .5Q18 7 14 13.500" stroke="#77828f" /></svg></button>
    </div>
    <button class="clock"><span>09:21</span><span>08.12.2023</span></button>
    <button class="notifications" aria-label="Benachrichtigungen">
      <svg width="17" height="17" viewBox="0 0 17 17"><path d="M0 0h16v13H8L4 17V13H0z" fill="#fff" /><path d="M3 3.500h10M3 6.500h10M3 9.500h6" stroke="#1b2a42" /></svg>
      <span class="badge">4</span>
    </button>
  </footer>
</div>

<style>
  :global(body) {
    margin: 0;
  }
  .app {
    display: flex;
    flex-direction: column;
    height: 100vh;
    overflow: hidden;
    font-family: "Open Sans", "Noto Sans", sans-serif;
    font-size: 11px;
    line-height: 16px;
    color: #262626;
    background: #e6e6e6;
  }
  .defs {
    position: absolute;
  }
  button,
  input,
  select,
  textarea {
    font: inherit;
    color: inherit;
    border: none;
    background: none;
    padding: 0;
    margin: 0;
    border-radius: 0;
    outline: none;
  }
  button {
    display: flex;
    align-items: center;
    white-space: nowrap;
  }
  svg {
    flex: none;
  }
  .fill {
    flex: 1;
  }

  .top {
    position: relative;
    background: #b7472a;
    color: #fff;
  }
  .circuit {
    position: absolute;
    top: 0;
    right: 0;
  }
  .title-bar {
    position: relative;
    display: grid;
    grid-template-columns: 1fr auto 1fr;
    align-items: center;
    height: 34px;
  }
  .quick {
    display: flex;
    align-items: center;
    padding-left: 21px;
  }
  .quick button {
    gap: 7px;
  }
  .save {
    margin-right: 13px;
  }
  .quick .undo {
    margin-right: 12px;
  }
  .redo {
    margin-right: 14px;
  }
  .present {
    margin-right: 10px;
  }
  .touch {
    margin-right: 17px;
  }
  .title-end {
    display: flex;
    align-items: center;
    justify-content: flex-end;
  }
  .account {
    display: flex;
    align-items: center;
    gap: 10px;
    margin-right: 12px;
  }
  .window-buttons {
    display: flex;
    height: 34px;
  }
  .window-buttons button {
    width: 46px;
    height: 30px;
    justify-content: center;
  }
  .tab-bar {
    position: relative;
    display: flex;
    align-items: center;
    height: 30px;
    padding-right: 15px;
  }
  .tabs {
    display: flex;
    height: 30px;
    padding-left: 2px;
  }
  .tabs button {
    padding: 0 14px;
  }
  .tabs button:first-child {
    margin-right: 3px;
  }
  .tabs .active {
    background: #f3f3f3;
    color: #b7472a;
  }
  .tell-me {
    display: flex;
    align-items: center;
    gap: 14px;
    margin-left: 20px;
    flex: 1;
  }
  .tell-me input {
    width: 160px;
  }
  .tell-me input::placeholder {
    color: #fff;
    opacity: 1;
  }

  .ribbon {
    position: relative;
    z-index: 2;
    display: flex;
    height: 92px;
    background: #f3f3f3;
    border-bottom: 1px solid #c8c8c8;
  }
  .group {
    display: flex;
    flex-direction: column;
    justify-content: space-between;
    margin: 4px 0;
    border-right: 1px solid #828282;
  }
  .group-name {
    text-align: center;
    line-height: 16px;
    margin-bottom: -4px;
  }
  .preview {
    width: 68px;
  }
  .big {
    flex-direction: column;
    gap: 4px;
    padding-top: 3px;
    color: #b1b1b1;
  }
  .gallery-slot {
    position: relative;
    flex: 0 0 1344px;
  }
  .gallery {
    position: absolute;
    top: 6px;
    left: 8px;
    padding: 1px 18px 11px 1px;
    background: #fff;
    border: 1px solid #c6c6c6;
    box-shadow: 0 2px 6px rgba(0, 0, 0, 0.22);
  }
  h2 {
    margin: 0;
    padding-left: 9px;
    font-size: 11px;
    line-height: 22px;
    font-weight: 700;
    color: #6a6a6a;
    background: #ebebeb;
  }
  .grid {
    display: grid;
    grid-template-columns: repeat(16, 82px);
    padding-right: 1px;
  }
  .item {
    flex-direction: column;
    gap: 2px;
    height: 55px;
    padding-top: 5px;
    border: 1px solid transparent;
    color: #5c5c5c;
  }
  .item.selected {
    background: #d1d0cf;
    border-color: #8a8a8a;
    color: #262626;
  }
  .item:hover:not(.selected) {
    background: #e6e6e6;
  }
  .mark {
    font-family: "Liberation Sans", sans-serif;
    font-size: 20px;
    font-weight: bold;
    fill: #c9d8ea;
  }
  .grip {
    position: absolute;
    right: 4px;
    bottom: 3px;
  }
  .effect {
    width: 88px;
    align-items: flex-start;
  }
  .timing {
    width: 309px;
  }
  .columns {
    display: flex;
    margin-top: -1px;
  }
  .column {
    display: flex;
    flex-direction: column;
    padding-left: 11px;
    width: 160px;
  }
  .row {
    display: flex;
    align-items: center;
    gap: 4px;
    height: 23px;
  }
  .combo,
  .spin {
    display: flex;
    align-items: center;
    box-sizing: border-box;
    height: 23px;
    margin-left: auto;
    background: #fff;
    border: 1px solid #ababab;
  }
  .combo {
    width: 96px;
    margin-right: 3px;
  }
  select {
    appearance: none;
    width: 81px;
    height: 21px;
    padding-left: 2px;
    margin-right: 3px;
    border-right: 1px solid #ababab;
  }
  .spin {
    width: 65px;
  }
  .column:first-child .spin {
    margin-right: 17px;
  }
  .spin input {
    width: 50px;
    padding-left: 2px;
  }
  .steps {
    display: flex;
    flex-direction: column;
    gap: 5px;
  }
  .advance {
    width: 126px;
    padding-left: 5px;
    box-shadow: inset 1px 0 0 #d5d5d5;
  }
  .check {
    display: flex;
    align-items: center;
    gap: 5px;
  }
  .advance label {
    gap: 5px;
    padding-left: 3px;
  }
  input[type="checkbox"] {
    appearance: none;
    box-sizing: border-box;
    width: 13px;
    height: 13px;
    background: #fff;
    border: 1px solid #666;
  }
  input[type="checkbox"]:checked::after {
    content: "";
    display: block;
    width: 3px;
    height: 6px;
    margin: 1px 0 0 4px;
    border: solid #333;
    border-width: 0 1px 1px 0;
    transform: rotate(40deg);
  }
  .pin {
    align-self: flex-end;
    margin: 0 7px 3px auto;
  }

  main {
    display: flex;
    flex: 1;
    min-height: 0;
  }
  .slides {
    box-sizing: border-box;
    width: 303px;
    margin-bottom: 3px;
    border-right: 1px solid #bfbfbf;
  }
  .slide-row {
    display: flex;
    margin-bottom: 17px;
  }
  .slide-row span {
    width: 20px;
    padding-right: 12px;
    text-align: right;
    font-size: 15px;
    color: #d35230;
  }
  .preview-slide {
    box-sizing: border-box;
    width: 245px;
    height: 65px;
    margin-left: 3px;
    background: #fff;
    border: 1px solid #c6c6c6;
    border-top: none;
  }
  .preview-slide.current {
    width: 251px;
    height: 145px;
    margin-left: 0;
    border: 3px solid #750b14;
  }
  .editor {
    display: flex;
    flex-direction: column;
    flex: 1;
    padding-left: 2px;
  }
  .stage {
    display: flex;
    flex: 1;
    gap: 32px;
    padding-left: 32px;
  }
  .slide {
    display: flex;
    flex-direction: column;
    gap: 15px;
    flex: 1;
    margin-bottom: 19px;
    padding: 0 104px 85px 105px;
    background: #fff;
    border: 1px solid #c6c6c6;
    border-top: none;
  }
  .placeholder {
    border: 1px dotted #555;
  }
  .heading {
    height: 137px;
    border-top: none;
  }
  .content {
    display: flex;
    align-items: center;
    justify-content: center;
    flex: 1;
  }
  .inserts {
    display: grid;
    grid-template-columns: repeat(4, 36px);
    padding: 4px 0 0 4px;
  }
  .scroll {
    display: flex;
    flex-direction: column;
    width: 16px;
    padding-bottom: 18px;
  }
  .track {
    flex: 330;
    margin-right: 1px;
    background: #f3f3f3;
  }
  .handle {
    flex: 405;
    box-sizing: border-box;
    width: 15px;
    background: #fff;
    border: 1px solid #999;
  }
  .scroll .down {
    box-sizing: border-box;
    height: 15px;
    margin-bottom: 4px;
    background: #fff;
    border: 1px solid #999;
  }
  .scroll button {
    width: 15px;
    margin-bottom: 6px;
    justify-content: center;
  }
  .notes {
    height: 43px;
    padding: 5px 10px;
    border-top: 1px solid #bfbfbf;
    resize: none;
    font-size: 14px;
    line-height: 22px;
  }
  .notes::placeholder {
    color: #5a5a5a;
  }

  .status {
    display: flex;
    align-items: center;
    height: 21px;
    padding-left: 12px;
    background: #f3f3f3;
    border-top: 1px solid #c6c6c6;
  }
  .count,
  .access,
  .notes-btn,
  .comments-btn,
  .percent {
    padding-bottom: 2px;
  }
  .spell {
    margin-left: 19px;
  }
  .access {
    margin-left: 16px;
    gap: 3px;
    font-weight: 600;
  }
  .notes-btn {
    gap: 4px;
    margin-right: 18px;
  }
  .comments-btn {
    gap: 3px;
    margin-right: 18px;
  }
  .views {
    display: flex;
    margin-right: 5px;
  }
  .views button {
    width: 40px;
    height: 21px;
    justify-content: center;
  }
  .views .on {
    background: #c6c6c6;
  }
  .step {
    width: 9px;
  }
  .zoom {
    appearance: none;
    width: 100px;
    height: 12px;
    margin: 0 5px;
    background: linear-gradient(#444, #444) center / 100% 1px no-repeat;
  }
  .zoom::-webkit-slider-thumb {
    appearance: none;
    width: 5px;
    height: 11px;
    background: #444;
  }
  .percent {
    margin: 0 14px 0 11px;
  }
  .fit {
    margin-right: 6px;
  }

  .taskbar {
    display: flex;
    align-items: center;
    height: 40px;
    color: #fff;
    background: linear-gradient(90deg, #20353f, #1d3340 45%, #1b2944 85%, #1c2642);
  }
  .start {
    width: 48px;
    height: 40px;
    justify-content: center;
  }
  .search {
    display: flex;
    align-items: center;
    box-sizing: border-box;
    width: 288px;
    height: 40px;
    padding: 0 10px 0 11px;
    background: #f3f3f3;
    border: 1px solid #b8bcbe;
    color: #222;
  }
  .search input {
    flex: 1;
    min-width: 0;
    padding: 2px 0 0 10px;
    font-size: 14px;
  }
  .search input::placeholder {
    color: #222;
  }
  .apps {
    display: flex;
    gap: 1px;
    padding-left: 3px;
  }
  .apps button {
    position: relative;
    width: 48px;
    height: 40px;
    justify-content: center;
  }
  .apps .running::after {
    content: "";
    position: absolute;
    bottom: 0;
    left: 4px;
    right: 4px;
    height: 2px;
    background: #76b9ed;
  }
  .apps .current {
    background: #4d606a;
  }
  .apps .current::after {
    left: 0;
    right: 0;
  }
  .app-letter {
    font-size: 10px;
    font-weight: bold;
    fill: #fff;
  }
  .tray {
    display: flex;
  }
  .tray button {
    width: 32px;
    height: 40px;
    justify-content: center;
  }
  .clock {
    flex-direction: column;
    width: 69px;
    line-height: 18px;
  }
  .notifications {
    position: relative;
    height: 28px;
    padding-left: 9px;
    margin-right: 4px;
    padding-right: 19px;
    border-right: 1px solid #66717f;
  }
  .badge {
    position: absolute;
    left: 16px;
    bottom: -4px;
    box-sizing: border-box;
    width: 17px;
    height: 17px;
    border: 1px solid #8c8c8c;
    border-radius: 50%;
    background: #333;
    text-align: center;
    line-height: 15px;
    font-weight: bold;
  }
</style>
